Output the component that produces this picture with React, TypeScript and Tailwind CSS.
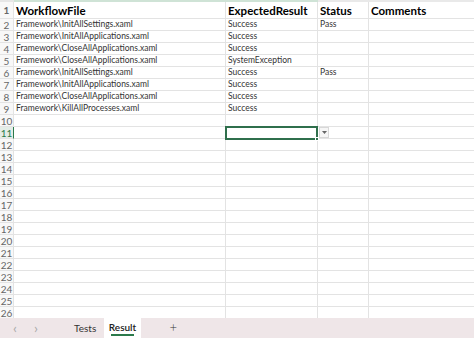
import React from 'react';

const rows: [string, string, string, string][] = [
  ['Framework\\InitAllSettings.xaml', 'Success', 'Pass', ''],
  ['Framework\\InitAllApplications.xaml', 'Success', '', ''],
  ['Framework\\CloseAllApplications.xaml', 'Success', '', ''],
  ['Framework\\CloseAllApplications.xaml', 'SystemException', '', ''],
  ['Framework\\InitAllSettings.xaml', 'Success', 'Pass', ''],
  ['Framework\\InitAllApplications.xaml', 'Success', '', ''],
  ['Framework\\CloseAllApplications.xaml', 'Success', '', ''],
  ['Framework\\KillAllProcesses.xaml', 'Success', '', ''],
];

const font = { fontFamily: 'Lato, "Liberation Sans", sans-serif' };

function RowHead({ n, active }: { n: number; active?: boolean }) {
  return (
    <div
      className={`w-[14px] shrink-0 border-b border-r text-[10px] leading-none flex items-center justify-center ${
        active ? 'bg-[#e3ede7] border-r-[#2b7a4b] border-b-[#e3e3e3] text-[#2b7a4b]' : 'bg-[#f8f8f8] border-[#e3e3e3] text-[#666]'
      }`}
    >
      {n}
    </div>
  );
}

export default function App() {
  const empty = Array.from({ length: 15 }, (_, i) => i + 12);
  return (
    <div className="w-[474px] h-[338px] bg-white overflow-hidden flex flex-col" style={font}>
      {/* column header strip */}
      <div className="flex h-[2px] shrink-0">
        <div className="w-[14px] bg-[#e6e6e6]" />
        <div className="w-[304px] bg-[#cfe3d6]" />
        <div className="flex-1 bg-[#e9e9e9]" />
      </div>

      <div className="flex-1 overflow-hidden">
        {/* header row */}
        <div className="flex h-[17px] text-[11.5px] font-bold text-black leading-[17px]">
          <RowHead n={1} />
          <div className="w-[212px] border-b border-r border-[#e3e3e3] pl-[2px]">WorkflowFile</div>
          <div className="w-[92px] border-b border-r border-[#e3e3e3] pl-[2px]">ExpectedResult</div>
          <div className="w-[51px] border-b border-r border-[#e3e3e3] pl-[2px]">Status</div>
          <div className="flex-1 border-b border-[#e3e3e3] pl-[2px]">Comments</div>
        </div>

        {rows.map((r, i) => (
          <div key={i} className="flex h-[12px] text-[8.5px] text-[#333] leading-[11px]">
            <RowHead n={i + 2} />
            <div className="w-[212px] border-b border-r border-[#e3e3e3] pl-[2px] whitespace-nowrap">{r[0]}</div>
            <div className="w-[92px] border-b border-r border-[#e3e3e3] pl-[2px] whitespace-nowrap">{r[1]}</div>
            <div className="w-[51px] border-b border-r border-[#e3e3e3] pl-[2px]">{r[2]}</div>
            <div className="flex-1 border-b border-[#e3e3e3]">{r[3]}</div>
          </div>
        ))}

        <div className="flex h-[12px]">
          <RowHead n={10} />
          <div className="w-[212px] border-b border-r border-[#e3e3e3]" />
          <div className="w-[92px] border-b border-r border-[#e3e3e3]" />
          <div className="w-[51px] border-b border-r border-[#e3e3e3]" />
          <div className="flex-1 border-b border-[#e3e3e3]" />
        </div>

        {/* selected row 11 */}
        <div className="flex h-[12px]">
          <RowHead n={11} active />
          <div className="w-[212px] border-b border-r border-[#e3e3e3]" />
          <div className="relative w-[92px] border-b border-r border-[#e3e3e3]">
            <div className="absolute -left-[1px] -top-[1px] w-[93px] h-[14px] border-2 border-[#2f6f4c]" />
            <div className="absolute right-[-2px] bottom-[-3px] w-[4px] h-[4px] bg-[#2f6f4c] border border-white" />
            <div className="absolute left-[93px] top-0 w-[10px] h-[11px] border border-[#d8d8d8] bg-[#f6f6f6] flex items-center justify-center">
              <svg width="5" height="3" viewBox="0 0 5 3">
                <path d="M0 0h5L2.5 3z" fill="#666" />
              </svg>
            </div>
          </div>
          <div className="w-[51px] border-b border-r border-[#e3e3e3]" />
          <div className="flex-1 border-b border-[#e3e3e3]" />
        </div>

        {empty.map((n) => (
          <div key={n} className="flex h-[12px]">
            <RowHead n={n} />
            <div className="w-[212px] border-b border-r border-[#e3e3e3]" />
            <div className="w-[92px] border-b border-r border-[#e3e3e3]" />
            <div className="w-[51px] border-b border-r border-[#e3e3e3]" />
            <div className="flex-1 border-b border-[#e3e3e3]" />
          </div>
        ))}
      </div>

      {/* sheet tabs */}
      <div className="h-[20px] shrink-0 bg-[#efe6e8] flex items-stretch text-[10px]">
        <div className="w-[10px]" />
        <div className="w-[10px] flex items-center justify-center text-[#aaa] text-[14px] leading-none">‹</div>
        <div className="w-[11px]" />
        <div className="w-[10px] flex items-center justify-center text-[#aaa] text-[14px] leading-none">›</div>
        <div className="w-[33px]" />
        <div className="w-[30px] flex items-center text-[#333]">Tests</div>
        <div className="w-[37px] bg-white flex flex-col items-center justify-center pt-[1px]">
          <span className="text-[10px] font-semibold text-[#222] leading-[13px]">Result</span>
          <span className="w-[23px] h-[2px] bg-[#2b7a4b]" />
        </div>
        <div className="w-[36px] flex items-center justify-end text-[#333] text-[13px] font-light">+</div>
      </div>
    </div>
  );
}
